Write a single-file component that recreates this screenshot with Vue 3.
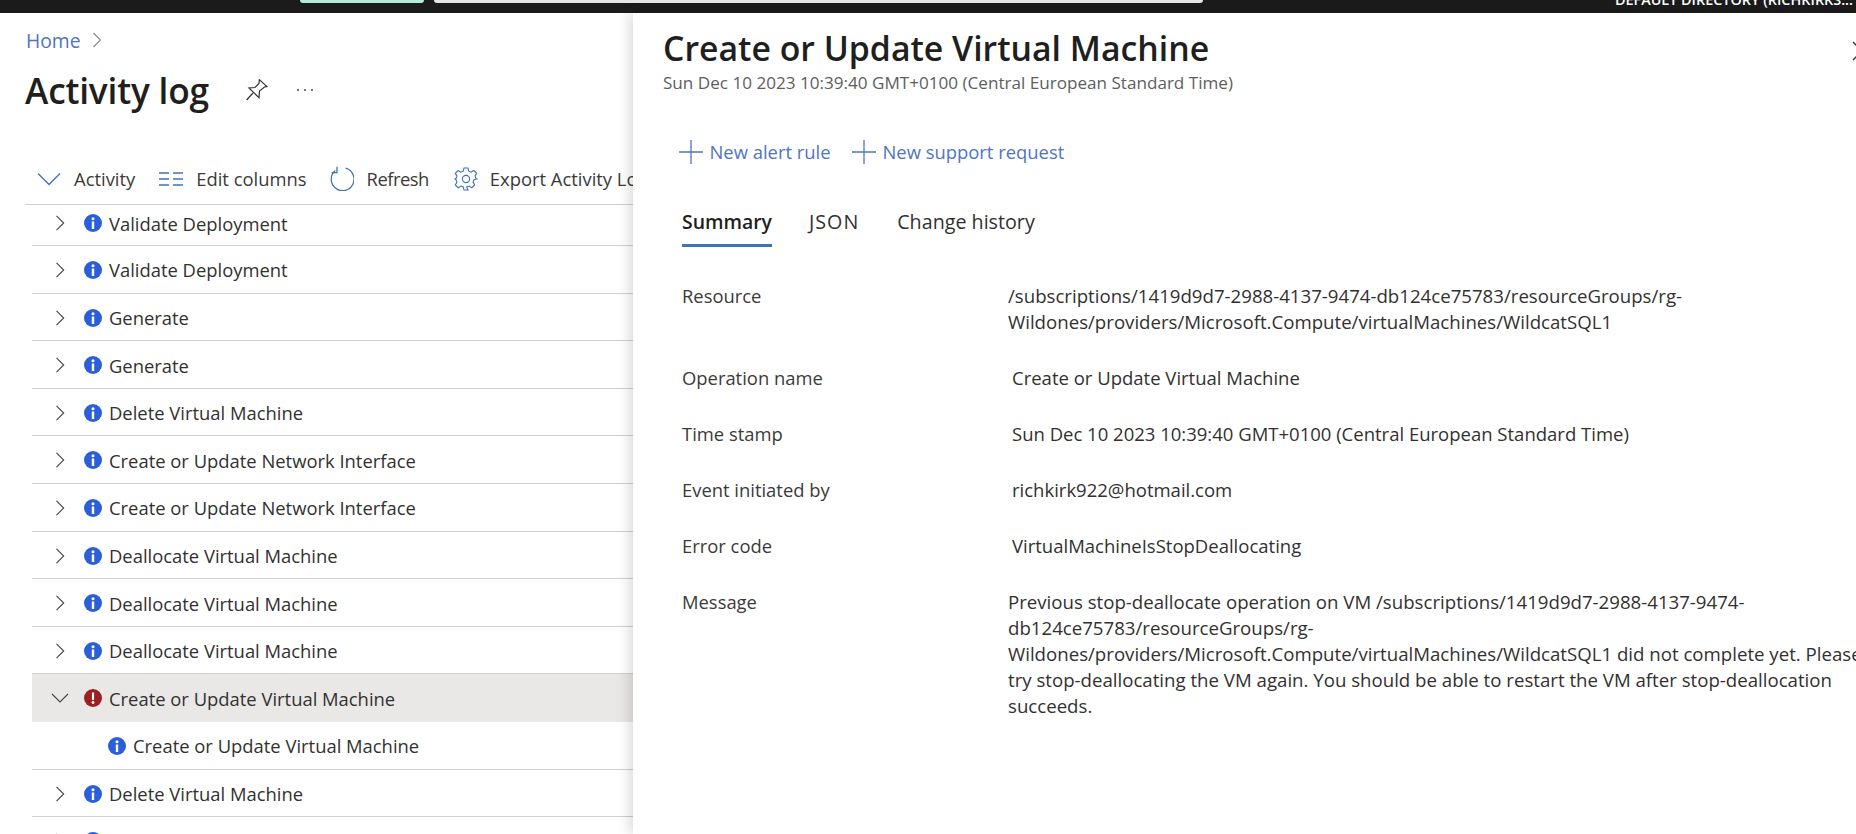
<script setup>
const rows = [
  { label: 'Validate Deployment', kind: 'info', first: true },
  { label: 'Validate Deployment', kind: 'info' },
  { label: 'Generate', kind: 'info' },
  { label: 'Generate', kind: 'info' },
  { label: 'Delete Virtual Machine', kind: 'info' },
  { label: 'Create or Update Network Interface', kind: 'info' },
  { label: 'Create or Update Network Interface', kind: 'info' },
  { label: 'Deallocate Virtual Machine', kind: 'info' },
  { label: 'Deallocate Virtual Machine', kind: 'info' },
  { label: 'Deallocate Virtual Machine', kind: 'info' },
  { label: 'Create or Update Virtual Machine', kind: 'error', open: true },
  { label: 'Create or Update Virtual Machine', kind: 'info', child: true },
  { label: 'Delete Virtual Machine', kind: 'info' },
  { label: 'Create or Update Virtual Machine', kind: 'info' }
]
const details = [
  { k: 'Resource', v: ['/subscriptions/1419d9d7-2988-4137-9474-db124ce75783/resourceGroups/rg-', 'Wildones/providers/Microsoft.Compute/virtualMachines/WildcatSQL1'], flush: true },
  { k: 'Operation name', v: ['Create or Update Virtual Machine'] },
  { k: 'Time stamp', v: ['Sun Dec 10 2023 10:39:40 GMT+0100 (Central European Standard Time)'] },
  { k: 'Event initiated by', v: ['richkirk922@hotmail.com'] },
  { k: 'Error code', v: ['VirtualMachineIsStopDeallocating'] },
  { k: 'Message', v: ['Previous stop-deallocate operation on VM /subscriptions/1419d9d7-2988-4137-9474-', 'db124ce75783/resourceGroups/rg-', 'Wildones/providers/Microsoft.Compute/virtualMachines/WildcatSQL1 did not complete yet. Please', 'try stop-deallocating the VM again. You should be able to restart the VM after stop-deallocation', 'succeeds.'], flush: true }
]
</script>

<template>
  <div class="page">
    <header class="topbar">
      <span class="pill"></span>
      <span class="field"></span>
      <span class="directory">DEFAULT DIRECTORY (RICHKIRKS...</span>
    </header>

    <main class="blade">
      <nav class="crumb">
        <a>Home</a>
        <svg width="10" height="16" viewBox="0 0 10 16"><path d="M1.5 1l7 7-7 7" fill="none" stroke="#8a8886" stroke-width="1.1"/></svg>
      </nav>
      <div class="heading">
        <h1>Activity log</h1>
        <svg class="pin" width="22" height="22" viewBox="0 0 22 22" fill="none" stroke="#323130" stroke-width="1.2">
          <path d="M13.3.6L21 7.600l-2.500.4-5 4L13 18.600 3 9l6-.5 4-4z"/>
          <path d="M7 14L.6 21"/>
        </svg>
        <svg class="dots" width="18" height="4" viewBox="0 0 18 4" fill="#484644"><circle cx="2" cy="2" r="1"/><circle cx="9" cy="2" r="1"/><circle cx="16" cy="2" r="1"/></svg>
      </div>

      <div class="toolbar">
        <span class="tool first">
          <svg width="24" height="14" viewBox="0 0 24 14"><path d="M1 1.500l11 11 11-11" fill="none" stroke="#3f72b8" stroke-width="1.3"/></svg>
          Activity
        </span>
        <span class="tool">
          <svg width="24" height="14" viewBox="0 0 24 14" fill="none" stroke="#3f72b8" stroke-width="1.4"><path d="M0 1h10M0 7h10M0 13h10M14 1h10M14 7h10M14 13h10"/></svg>
          Edit columns
        </span>
        <span class="tool refresh">
          <svg width="24" height="25" viewBox="0 0 24 25" fill="none" stroke="#3f72b8" stroke-width="1.3"><path d="M15.500 2.200A11.400 11.400 0 1 1 5.200 4.600"/><path d="M7 .8V6.600H1.600"/></svg>
          Refresh
        </span>
        <span class="tool export">
          <svg width="24" height="24" viewBox="0 0 24 24" fill="none" stroke="#3f72b8" stroke-width="1.1"><circle cx="12" cy="12" r="3.600"/><path d="M10 1h4l.7 3.200 2.400 1 2.800-1.700 2.800 2.800-1.700 2.800 1 2.400L23 12l-3 .7-1 2.400 1.700 2.800-2.800 2.800-2.800-1.700-2.400 1L14 23h-4l-.7-3-2.400-1-2.800 1.700-2.800-2.800L3 15.100l-1-2.400L1 12l1-.5 1-2.400-1.700-2.800 2.800-2.800 2.800 1.700 2.400-1z"/></svg>
          Export Activity Logs
        </span>
      </div>

      <ul class="list">
        <li v-for="(r, i) in rows" :key="i" class="row" :class="{ 'row-first': r.first, 'row-open': r.open, 'row-child': r.child }">
          <span class="chev">
            <svg v-if="r.open" width="18" height="10" viewBox="0 0 18 10"><path d="M1 1l8 8 8-8" fill="none" stroke="#444" stroke-width="1.1"/></svg>
            <svg v-else-if="!r.child" width="10" height="16" viewBox="0 0 10 16"><path d="M1.500.8l7.200 7.200-7.200 7.200" fill="none" stroke="#444" stroke-width="1.1"/></svg>
          </span>
          <svg class="status" width="18" height="18" viewBox="0 0 18 18">
            <template v-if="r.kind === 'info'">
              <circle cx="9" cy="9" r="9" fill="#2b5fd9"/>
              <circle cx="9" cy="4.800" r="1.500" fill="#fff"/>
              <rect x="7.800" y="7.500" width="2.400" height="7.500" fill="#fff"/>
            </template>
            <template v-else>
              <circle cx="9" cy="9" r="9" fill="#9c1f23"/>
              <rect x="7.900" y="3.500" width="2.200" height="7.500" fill="#fff"/>
              <circle cx="9" cy="13.500" r="1.400" fill="#fff"/>
            </template>
          </svg>
          <span class="label">{{ r.label }}</span>
        </li>
      </ul>
    </main>

    <aside class="panel">
      <svg class="close" width="20" height="20" viewBox="0 0 20 20"><path d="M1 1l18 18M19 1L1 19" fill="none" stroke="#323130" stroke-width="1.3"/></svg>
      <h2>Create or Update Virtual Machine</h2>
      <p class="stamp">Sun Dec 10 2023 10:39:40 GMT+0100 (Central European Standard Time)</p>

      <div class="actions">
        <a class="action">
          <svg width="24" height="24" viewBox="0 0 24 24"><path d="M12 0v24M0 12h24" stroke="#4f74c4" stroke-width="1.300" fill="none"/></svg>
          New alert rule
        </a>
        <a class="action">
          <svg width="24" height="24" viewBox="0 0 24 24"><path d="M12 0v24M0 12h24" stroke="#4f74c4" stroke-width="1.300" fill="none"/></svg>
          New support request
        </a>
      </div>

      <div class="tabs">
        <span class="tab active">Summary</span>
        <span class="tab json">JSON</span>
        <span class="tab">Change history</span>
      </div>

      <dl class="facts">
        <div v-for="d in details" :key="d.k" class="fact">
          <dt>{{ d.k }}</dt>
          <dd :class="{ flush: d.flush }"><span v-for="(line, i) in d.v" :key="i" class="line">{{ line }}</span></dd>
        </div>
      </dl>
    </aside>
  </div>
</template>

<style>
html, body { margin: 0; background: #fff; }
</style>

<style scoped>
.page {
  position: relative;
  width: 1856px;
  height: 834px;
  overflow: hidden;
  background: #fff;
  color: #323130;
  font-family: "Open Sans", "Liberation Sans", sans-serif;
  font-size: 18.400px;
}
.topbar {
  height: 13px;
  background: #1b1b1b;
  display: flex;
  align-items: flex-start;
  overflow: hidden;
}
.pill { width: 124px; height: 3px; margin-left: 300px; background: #b4ecd9; border-radius: 0 0 3px 3px; }
.field { width: 769px; height: 3px; margin-left: 10px; background: #e6e6e6; border-radius: 0 0 3px 3px; }
.directory {
  margin-left: auto;
  margin-right: 3px;
  margin-top: -8px;
  color: #fff;
  font-size: 14.400px;
  line-height: 15px;
  font-weight: 600;
  white-space: nowrap;
}
.blade { padding-left: 26px; }
.crumb { display: flex; align-items: center; gap: 11px; height: 28px; margin-top: 13px; font-size: 19.300px; }
.crumb a { color: #4f74c4; }
.heading { display: flex; align-items: center; height: 48px; margin-top: 12px; margin-left: -1px; }
h1 { margin: 0; font-size: 35.300px; font-weight: 600; color: #201f1e; letter-spacing: -.2px; white-space: nowrap; }
.pin { margin-left: 37px; }
.dots { margin-left: 28px; }
.toolbar {
  display: flex;
  align-items: center;
  height: 52px;
  margin-top: 39px;
  margin-left: -1px;
  padding-left: 12px;
  border-bottom: 1px solid #d2d0ce;
  white-space: nowrap;
  box-sizing: border-box;
  gap: 24px;
}
.tool { display: inline-flex; align-items: center; gap: 13px; color: #3b3a39; }
.tool.refresh { letter-spacing: -.5px; margin-left: -1px; }
.tool.export { gap: 12px; margin-left: 1px; }
.list { list-style: none; margin: 0 0 0 6px; padding: 0; }
.row {
  display: flex;
  align-items: center;
  height: 47.600px;
  box-sizing: border-box;
  border-bottom: 1px solid #d2d0ce;
  padding-top: 1.400px;
  white-space: nowrap;
}
.row-first { height: 41px; padding-top: 0; padding-bottom: 4px; }
.row-open { background: #e9e8e6; border-bottom-color: #e9e8e6; }
.chev { width: 52px; padding-left: 23px; box-sizing: border-box; display: flex; align-items: center; flex: none; }
.row-open .chev { padding-left: 19px; }
.row-child { padding-left: 24px; }
.status { flex: none; margin-right: 7px; }
.panel {
  position: absolute;
  left: 633px;
  top: 13px;
  right: 0;
  bottom: 0;
  background: #fff;
  box-shadow: -4px 0 12px rgba(0, 0, 0, .14);
  padding: 14px 0 0 30px;
  box-sizing: border-box;
  white-space: nowrap;
}
.close { position: absolute; left: 1219px; top: 28px; }
h2 { margin: 0; font-size: 33.800px; line-height: 42px; font-weight: 600; color: #201f1e; }
.stamp { margin: 2px 0 0; font-size: 17.100px; line-height: 24px; color: #605e5c; }
.actions { display: flex; gap: 21.500px; margin-top: 44px; margin-left: 16px; }
.action { display: inline-flex; align-items: center; gap: 6.500px; color: #4f74c4; }
.tabs { display: flex; gap: 37px; margin-top: 34.500px; margin-left: 19px; font-size: 19.700px; }
.tab { height: 48px; line-height: 46px; box-sizing: border-box; }
.tab.active { font-weight: 600; font-size: 19.400px; color: #201f1e; border-bottom: 3px solid #3f72b8; }
.tab.json { letter-spacing: 1px; margin-right: 1px; }
.facts { margin: 36px 0 0 19px; }
.fact { display: flex; line-height: 26px; margin-bottom: 30px; }
dt { width: 330px; color: #3b3a39; flex: none; }
dd { margin: 0; font-size: 18.500px; }
dd.flush { margin-left: -4px; font-size: 18.650px; }
.line { display: block; }
</style>
